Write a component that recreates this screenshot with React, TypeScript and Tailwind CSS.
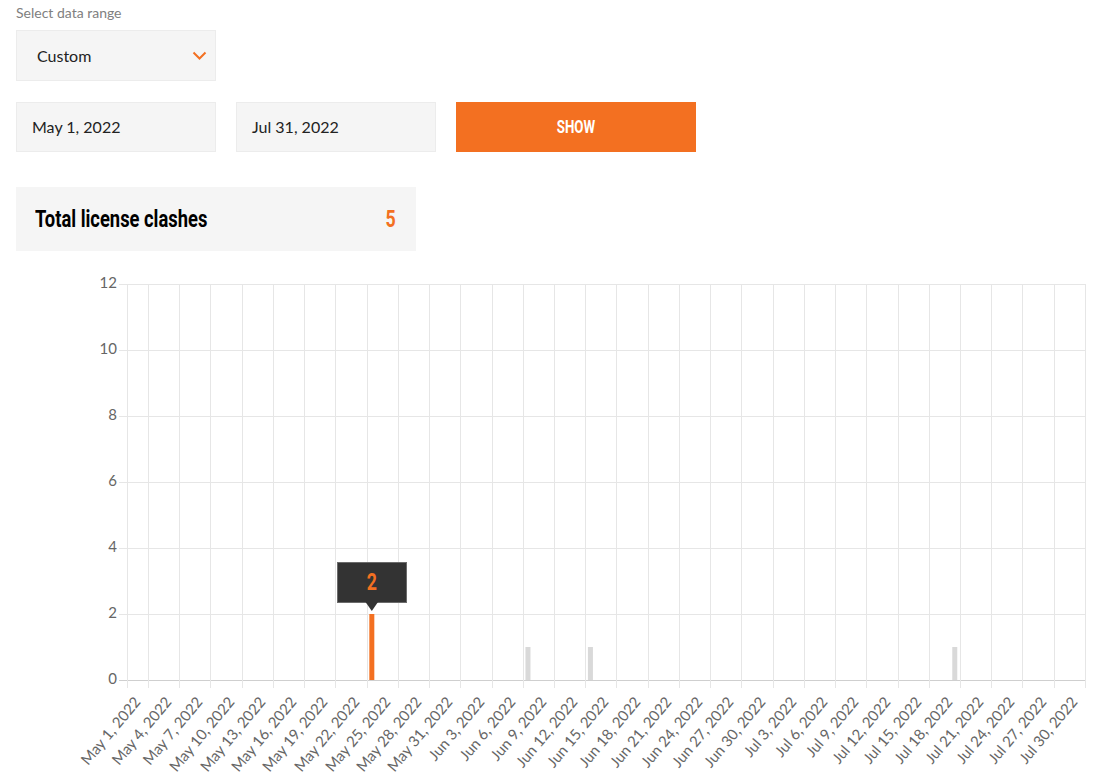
import React from "react";

const ORANGE = "#f37021";
const SX = 0.74;

const MONTHS = ["Jan", "Feb", "Mar", "Apr", "May", "Jun", "Jul", "Aug"];

function dateLabel(offset: number) {
  const d = new Date(2022, 4, 1 + offset);
  return `${MONTHS[d.getMonth()]} ${d.getDate()}, ${d.getFullYear()}`;
}

const X0 = 148;
const STEP = 31.23;
const DAY = STEP / 3;
const Y0 = 680;
const UNIT = 33;

const bars = [
  { d: 21, v: 2, c: ORANGE },
  { d: 36, v: 1, c: "#d9d9d9" },
  { d: 42, v: 1, c: "#d9d9d9" },
  { d: 77, v: 1, c: "#d9d9d9" },
];

function Chart() {
  const ticks = Array.from({ length: 31 }, (_, k) => k);
  const yTicks = [0, 2, 4, 6, 8, 10, 12];
  return (
    <svg width={1102} height={519} viewBox="0 262 1102 519" className="block">
      {yTicks.map((v) => {
        const y = Y0 - v * UNIT;
        return (
          <g key={v}>
            <line x1={119} x2={1085} y1={y + 0.5} y2={y + 0.5} stroke={v === 0 ? "#cfcfcf" : "#e6e6e6"} strokeWidth={1} />
            <text x={117} y={y + 0.5} textAnchor="end" dominantBaseline="middle" fontFamily="Lato, sans-serif" fontSize={15} fill="#666">
              {v}
            </text>
          </g>
        );
      })}
      <line x1={127.5} x2={127.5} y1={284} y2={688} stroke="#e6e6e6" />
      {ticks.map((k) => {
        const x = Math.round(X0 + k * STEP) + 0.5;
        const ax = x - 10;
        const ay = 700;
        return (
          <g key={k}>
            <line x1={x} x2={x} y1={284} y2={688} stroke="#e6e6e6" />
            <text
              x={ax}
              y={ay}
              textAnchor="end"
              dominantBaseline="middle"
              fontFamily="Lato, sans-serif"
              fontSize={15}
              fill="#666"
              transform={`rotate(-50 ${ax} ${ay})`}
            >
              {dateLabel(k * 3)}
            </text>
          </g>
        );
      })}
      {bars.map((b) => {
        const cx = X0 + b.d * DAY + DAY / 2;
        return <rect key={b.d} x={cx - 2.5} y={Y0 - b.v * UNIT} width={5} height={b.v * UNIT} fill={b.c} />;
      })}
      <g>
        <rect x={337.5} y={562.5} width={69} height={40} fill="#333" stroke="#6b6b6b" />
        <polygon points="365.5,602 378,602 371.8,611" fill="#333" />
        <text
          x={0}
          y={0}
          textAnchor="middle"
          dominantBaseline="central"
          fontFamily="Roboto, sans-serif"
          fontWeight={700}
          fontSize={24}
          fill={ORANGE}
          transform={`translate(371.8 581.5) scale(${SX} 1)`}
        >
          2
        </text>
      </g>
    </svg>
  );
}

function Cond({ children, className, origin }: { children: React.ReactNode; className: string; origin: string }) {
  return (
    <span className={`inline-block font-['Roboto',sans-serif] font-bold ${origin} ${className}`}>{children}</span>
  );
}

export default function App() {
  return (
    <div className="bg-white w-[1102px] h-[781px] overflow-hidden font-['Lato',sans-serif]">
      <div className="px-4">
        <div className="pt-[3px] text-[14px] leading-[20px] text-[#808080]">Select data range</div>
        <div className="mt-[7px] w-[200px] h-[51px] bg-[#f5f5f5] border border-[#ececec] flex items-center justify-between pl-5 pr-[8px] text-[16px] text-[#222]">
          <span>Custom</span>
          <svg width={15} height={9} viewBox="0 0 15 9">
            <polyline points="1.5,1.5 7.5,7.5 13.5,1.5" fill="none" stroke={ORANGE} strokeWidth={2} />
          </svg>
        </div>
        <div className="mt-[21px] flex gap-5">
          <div className="w-[200px] h-[50px] bg-[#f5f5f5] border border-[#ececec] flex items-center pl-[15px] text-[16px] text-[#222]">
            May 1, 2022
          </div>
          <div className="w-[200px] h-[50px] bg-[#f5f5f5] border border-[#ececec] flex items-center pl-[15px] text-[16px] text-[#222]">
            Jul 31, 2022
          </div>
          <button className="w-[240px] h-[50px] bg-[#f37021] flex items-center justify-center">
            <Cond origin="origin-center scale-x-[0.74]" className="text-[18px] leading-none text-white">
              SHOW
            </Cond>
          </button>
        </div>
        <div className="mt-[35px] w-[400px] h-[64px] bg-[#f5f5f5] flex items-center justify-between pl-[19px] pr-[20px]">
          <Cond origin="origin-left scale-x-[0.765]" className="text-[24px] leading-none text-black">
            Total license clashes
          </Cond>
          <Cond origin="origin-right scale-x-[0.74]" className="text-[24px] leading-none text-[#f37021]">
            5
          </Cond>
        </div>
      </div>
      <div className="mt-[11px]">
        <Chart />
      </div>
    </div>
  );
}
